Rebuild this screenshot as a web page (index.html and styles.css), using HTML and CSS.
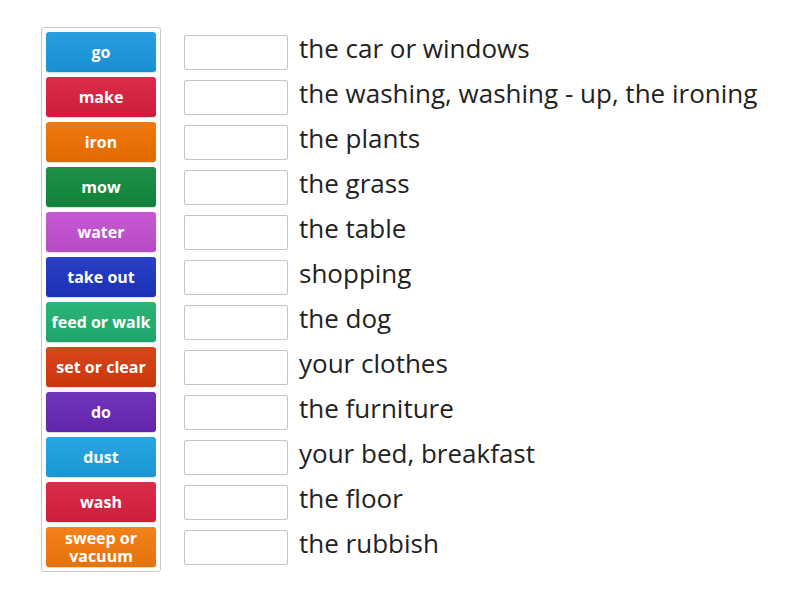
FILE: index.html
```html
<!DOCTYPE html>
<html lang="en">
<head>
<meta charset="utf-8">
<title>Household chores – match up</title>
<link rel="stylesheet" href="styles.css">
</head>
<body>
<main class="board">
  <div class="bank">
    <div class="tile c-blue">go</div>
    <div class="tile c-red">make</div>
    <div class="tile c-orange">iron</div>
    <div class="tile c-green">mow</div>
    <div class="tile c-pink">water</div>
    <div class="tile c-navy">take out</div>
    <div class="tile c-teal">feed or walk</div>
    <div class="tile c-rust">set or clear</div>
    <div class="tile c-purple">do</div>
    <div class="tile c-sky">dust</div>
    <div class="tile c-red">wash</div>
    <div class="tile c-amber">sweep or vacuum</div>
  </div>
  <div class="targets">
    <div class="row"><div class="slot"></div><div class="label">the car or windows</div></div>
    <div class="row"><div class="slot"></div><div class="label">the washing, washing - up, the ironing</div></div>
    <div class="row"><div class="slot"></div><div class="label">the plants</div></div>
    <div class="row"><div class="slot"></div><div class="label">the grass</div></div>
    <div class="row"><div class="slot"></div><div class="label">the table</div></div>
    <div class="row"><div class="slot"></div><div class="label">shopping</div></div>
    <div class="row"><div class="slot"></div><div class="label">the dog</div></div>
    <div class="row"><div class="slot"></div><div class="label">your clothes</div></div>
    <div class="row"><div class="slot"></div><div class="label">the furniture</div></div>
    <div class="row"><div class="slot"></div><div class="label">your bed, breakfast</div></div>
    <div class="row"><div class="slot"></div><div class="label">the floor</div></div>
    <div class="row"><div class="slot"></div><div class="label">the rubbish</div></div>
  </div>
</main>
</body>
</html>
```
FILE: styles.css
```css
html, body {
  margin: 0;
  background: #fff;
}

.board {
  display: flex;
  align-items: flex-start;
  gap: 23px;
  padding: 27px 0 0 41px;
}

/* word bank on the left */
.bank {
  display: flex;
  flex-direction: column;
  gap: 5px;
  padding: 4px;
  border: 1px solid #c8c8c8;
  border-radius: 3px;
}

.tile {
  width: 110px;
  height: 40px;
  box-sizing: border-box;
  padding: 0 2px 1px;
  border-radius: 3px;
  display: flex;
  align-items: center;
  justify-content: center;
  text-align: center;
  font-family: "Open Sans", "Liberation Sans", sans-serif;
  font-weight: 700;
  font-size: 16px;
  line-height: 18px;
  color: #fff;
  background-image: linear-gradient(to bottom, rgba(255,255,255,0.06), rgba(0,0,0,0.06));
  box-shadow: 0 1px 1px rgba(0,0,0,0.15);
}

.c-blue   { background-color: #1b98e0; }
.c-red    { background-color: #d9203e; }
.c-orange { background-color: #f07000; }
.c-green  { background-color: #118a3c; }
.c-pink   { background-color: #c24fd2; }
.c-navy   { background-color: #1c34c2; }
.c-teal   { background-color: #1fb070; }
.c-rust   { background-color: #d63a0c; }
.c-purple { background-color: #6a27b8; }
.c-sky    { background-color: #1da0e2; }
.c-amber  { background-color: #f27a0c; }

/* answer rows on the right */
.targets {
  display: flex;
  flex-direction: column;
  gap: 5px;
  padding-top: 5px;
}

.row {
  height: 40px;
  display: flex;
  align-items: flex-start;
  gap: 11px;
}

.slot {
  width: 104px;
  height: 35px;
  box-sizing: border-box;
  margin-top: 3px;
  border: 1px solid #c4c4c4;
  border-radius: 2px;
  background: #fff;
}

.label {
  font-family: "Open Sans", "Liberation Sans", sans-serif;
  font-size: 26px;
  line-height: 33px;
  color: #222;
  white-space: nowrap;
}
```
